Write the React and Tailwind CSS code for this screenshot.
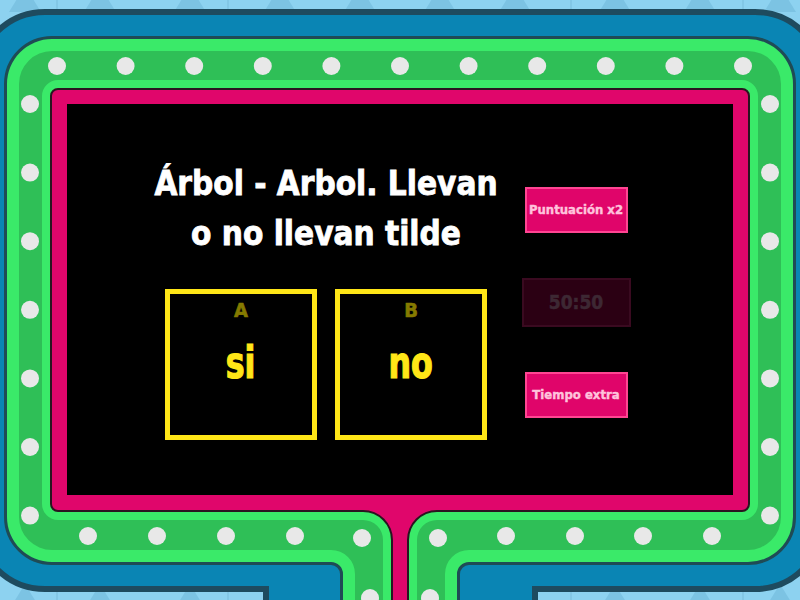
const BLUE =
  "M 45 12 H 755 A 68 68 0 0 1 823 80 V 521 A 68 68 0 0 1 755 589 H 535 V 615 H 266 V 589 H 45 A 68 68 0 0 1 -23 521 V 80 A 68 68 0 0 1 45 12 Z";
const OUTER =
  "M 52 39 H 748 A 45 45 0 0 1 793 84 V 517 A 45 45 0 0 1 748 562 H 469 A 12 12 0 0 0 457 574 V 620 H 343 V 574 A 12 12 0 0 0 331 562 H 52 A 45 45 0 0 1 7 517 V 84 A 45 45 0 0 1 52 39 Z";
const MID =
  "M 52 51 H 748 A 33 33 0 0 1 781 84 V 517 A 33 33 0 0 1 748 550 H 469 A 24 24 0 0 0 445 574 V 620 H 355 V 574 A 24 24 0 0 0 331 550 H 52 A 33 33 0 0 1 19 517 V 84 A 33 33 0 0 1 52 51 Z";
const INNER =
  "M 58 80 H 742 A 16 16 0 0 1 758 96 V 504 A 16 16 0 0 1 742 520 H 437 A 20 20 0 0 0 417 540 V 620 H 383 V 540 A 20 20 0 0 0 363 520 H 58 A 16 16 0 0 1 42 504 V 96 A 16 16 0 0 1 58 80 Z";
const PINK =
  "M 58 90 H 742 A 6 6 0 0 1 748 96 V 504 A 6 6 0 0 1 742 510 H 437 A 30 30 0 0 0 407 540 V 620 H 393 V 540 A 30 30 0 0 0 363 510 H 58 A 6 6 0 0 1 52 504 V 96 A 6 6 0 0 1 58 90 Z";

const side = [104, 172.6, 241.2, 309.8, 378.4, 447, 515.6];
const dots = [
  ...Array.from({ length: 11 }, (_, i) => [57 + i * 68.6, 66]),
  ...side.map((y) => [30, y]),
  ...side.map((y) => [770, y]),
  [88, 536], [157, 536], [226, 536], [295, 536], [362, 538],
  [438, 538], [506, 536], [575, 536], [643, 536], [712, 536],
  [370, 598], [430, 598],
];

const triangles = [25, 100, 190, 280, 360, 440, 515, 615, 700, 780];

function Frame() {
  return (
    <svg className="absolute inset-0" width="800" height="600" viewBox="0 0 800 600">
      {triangles.map((x) => (
        <g key={x} fill="#7cc3e3">
          <polygon points={`${x - 16},12 ${x},-14 ${x + 16},12`} />
          <polygon points={`${x - 16},610 ${x},584 ${x + 16},610`} />
        </g>
      ))}
      {[57, 228, 571, 743].map((x) => (
        <line key={x} x1={x} y1="0" x2={x} y2="600" stroke="#78bcdb" strokeWidth="1" />
      ))}
      <path d={BLUE} fill="#0a85b4" stroke="#1e4b5f" strokeWidth="6" />
      <path d={OUTER} fill="#1f4b55" stroke="#1f4b55" strokeWidth="6" />
      <path d={OUTER} fill="#3aea69" />
      <path d={MID} fill="#2fbf57" />
      <path d={INNER} fill="#3aea69" />
      {dots.map(([cx, cy], i) => (
        <circle key={i} cx={cx} cy={cy} r="9" fill="#e8e8e8" />
      ))}
      <path d={PINK} fill="#2a1520" stroke="#2a1520" strokeWidth="4" />
      <path d={PINK} fill="#e0066b" />
    </svg>
  );
}

function Answer({ letter, text }) {
  return (
    <div className="flex h-[151px] w-[152px] flex-col items-center border-[5px] border-[#ffe617]">
      <span className="mt-[7px] text-[20px] leading-[19px] font-bold text-[#857a00] [-webkit-text-stroke:0.6px_#857a00]">
        {letter}
      </span>
      <span className="mt-[21px] inline-block scale-x-80 text-[44px] leading-[44px] font-bold text-[#ffe617] [-webkit-text-stroke:1.2px_#ffe617]">
        {text}
      </span>
    </div>
  );
}

function PowerButton({ children, disabled }) {
  if (disabled) {
    return (
      <div className="flex h-[49px] w-[109px] items-center justify-center border-2 border-[#3a0a20] bg-[#2b0013] text-[19px] font-bold text-[#3d2833] [-webkit-text-stroke:0.5px_#3d2833]">
        {children}
      </div>
    );
  }
  return (
    <div className="flex h-[46px] w-[103px] items-center justify-center border-2 border-[#ff4592] bg-[#e0056a] text-[13px] font-bold text-[#ffc3dc] [-webkit-text-stroke:0.4px_#ffc3dc]">
      {children}
    </div>
  );
}

export default function App() {
  return (
    <div className="relative h-[600px] w-[800px] overflow-hidden bg-[#8dd2f0] font-['DejaVu_Sans_Condensed','DejaVu_Sans',sans-serif] font-stretch-condensed">
      <Frame />
      <div className="relative pt-[104px] pl-[67px]">
        <div className="flex h-[391px] w-[666px] items-center bg-black">
          <div className="ml-[84px] flex w-[350px] flex-col items-center">
            <h1 className="text-center text-[33px] leading-[50px] font-bold text-white [-webkit-text-stroke:0.8px_white]">
              Árbol - Arbol. Llevan
              <br />o no llevan tilde
            </h1>
            <div className="mt-[30px] flex gap-[18px]">
              <Answer letter="A" text="si" />
              <Answer letter="B" text="no" />
            </div>
          </div>
          <div className="mt-[6px] ml-[20px] flex w-[110px] flex-col items-center gap-[45px]">
            <PowerButton>Puntuación x2</PowerButton>
            <PowerButton disabled>50:50</PowerButton>
            <PowerButton>Tiempo extra</PowerButton>
          </div>
        </div>
      </div>
    </div>
  );
}
